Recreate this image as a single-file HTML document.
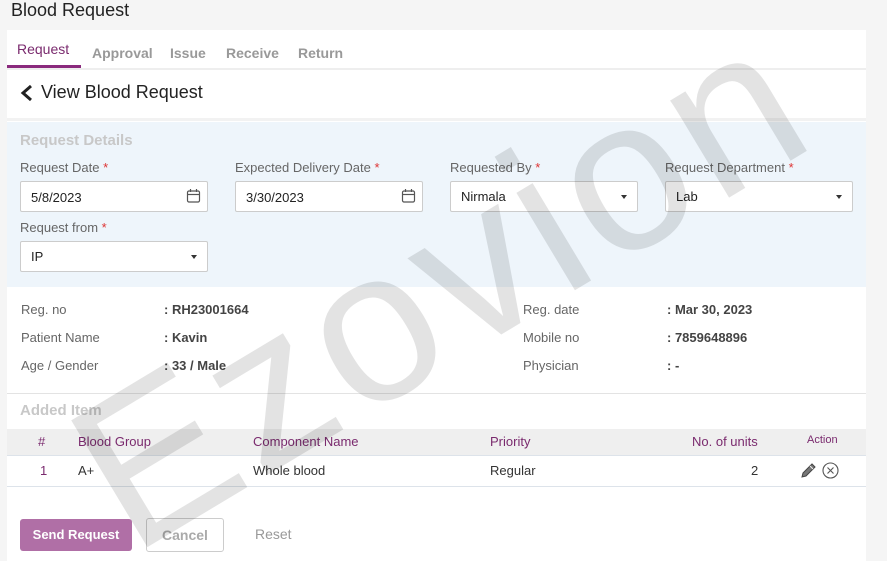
<!DOCTYPE html>
<html><head><style>
*{box-sizing:border-box;margin:0;padding:0}
html,body{width:887px;height:561px;overflow:hidden}
body{background:#f5f5f5;font-family:"Liberation Sans",sans-serif;font-size:13px;color:#333;position:relative}
.a{position:absolute;white-space:nowrap}
.card{position:absolute;left:7px;top:30px;width:859px;height:531px;background:#fff}
.lbl{color:#666;font-size:13px}
.req{color:#d33}
.inp{position:absolute;height:31px;border:1px solid #ccc;background:#fff;border-radius:2px;padding:8px 10px;font-size:13px;color:#222}
.car{position:absolute;right:10px;top:13px;border-left:3.5px solid transparent;border-right:3.5px solid transparent;border-top:4px solid #333}
.th{color:#7a2a6e;font-size:13px}
.wm{position:absolute;left:0;top:0;width:887px;height:561px;overflow:hidden;pointer-events:none}
</style></head><body>
<div class="a" style="left:11px;top:0px;font-size:18px;color:#222">Blood Request</div>
<div class="card"></div>
<div class="a" style="left:17px;top:41px;color:#7a2a6e;font-size:14px">Request</div>
<div class="a" style="left:7px;top:65px;width:74px;height:3px;background:#8a2a7d"></div>
<div class="a" style="left:92px;top:45px;color:#999;font-size:14px;font-weight:bold">Approval</div>
<div class="a" style="left:170px;top:45px;color:#999;font-size:14px;font-weight:bold">Issue</div>
<div class="a" style="left:226px;top:45px;color:#999;font-size:14px;font-weight:bold">Receive</div>
<div class="a" style="left:298px;top:45px;color:#999;font-size:14px;font-weight:bold">Return</div>
<div class="a" style="left:7px;top:68px;width:859px;height:2px;background:#eee"></div>
<svg class="a" style="left:20px;top:84px" width="14" height="18"><path d="M11 2 L3 9 L11 16" stroke="#222" stroke-width="3" fill="none"/></svg>
<div class="a" style="left:41px;top:82px;font-size:18px;color:#222">View Blood Request</div>
<div class="a" style="left:7px;top:118px;width:859px;height:3px;background:#f2f2f2"></div>
<div class="a" style="left:7px;top:122px;width:859px;height:165px;background:#eef5fb"></div>
<div class="a" style="left:20px;top:132px;font-size:15px;font-weight:bold;color:#c8c8c8">Request Details</div>
<div class="a lbl" style="left:20px;top:160px">Request Date <span class="req">*</span></div>
<div class="a lbl" style="left:235px;top:160px">Expected Delivery Date <span class="req">*</span></div>
<div class="a lbl" style="left:450px;top:160px">Requested By <span class="req">*</span></div>
<div class="a lbl" style="left:665px;top:160px">Request Department <span class="req">*</span></div>
<div class="inp" style="left:20px;top:181px;width:188px">5/8/2023<svg style="position:absolute;right:6px;top:6px" width="15" height="16"><rect x="1.5" y="3" width="12" height="11" rx="1.5" fill="none" stroke="#555" stroke-width="1.2"/><line x1="1.5" y1="6.5" x2="13.5" y2="6.5" stroke="#555" stroke-width="1.2"/><line x1="4.5" y1="1" x2="4.5" y2="4" stroke="#555" stroke-width="1.2"/><line x1="10.5" y1="1" x2="10.5" y2="4" stroke="#555" stroke-width="1.2"/></svg></div>
<div class="inp" style="left:235px;top:181px;width:188px">3/30/2023<svg style="position:absolute;right:6px;top:6px" width="15" height="16"><rect x="1.5" y="3" width="12" height="11" rx="1.5" fill="none" stroke="#555" stroke-width="1.2"/><line x1="1.5" y1="6.5" x2="13.5" y2="6.5" stroke="#555" stroke-width="1.2"/><line x1="4.5" y1="1" x2="4.5" y2="4" stroke="#555" stroke-width="1.2"/><line x1="10.5" y1="1" x2="10.5" y2="4" stroke="#555" stroke-width="1.2"/></svg></div>
<div class="inp" style="left:450px;top:181px;width:188px;padding-top:7px">Nirmala<span class="car"></span></div>
<div class="inp" style="left:665px;top:181px;width:188px;padding-top:7px">Lab<span class="car"></span></div>
<div class="a lbl" style="left:20px;top:220px">Request from <span class="req">*</span></div>
<div class="inp" style="left:20px;top:241px;width:188px;padding-top:7px">IP<span class="car"></span></div>
<div class="a lbl" style="left:21px;top:302px">Reg. no</div>
<div class="a lbl" style="left:21px;top:330px">Patient Name</div>
<div class="a lbl" style="left:21px;top:358px">Age / Gender</div>
<div class="a" style="left:164px;top:302px;font-weight:bold;color:#444">: RH23001664</div>
<div class="a" style="left:164px;top:330px;font-weight:bold;color:#444">: Kavin</div>
<div class="a" style="left:164px;top:358px;font-weight:bold;color:#444">: 33 / Male</div>
<div class="a lbl" style="left:523px;top:302px">Reg. date</div>
<div class="a lbl" style="left:523px;top:330px">Mobile no</div>
<div class="a lbl" style="left:523px;top:358px">Physician</div>
<div class="a" style="left:667px;top:302px;font-weight:bold;color:#444">: Mar 30, 2023</div>
<div class="a" style="left:667px;top:330px;font-weight:bold;color:#444">: 7859648896</div>
<div class="a" style="left:667px;top:358px;font-weight:bold;color:#444">: -</div>
<div class="a" style="left:7px;top:393px;width:859px;height:1px;background:#e3e3e3"></div>
<div class="a" style="left:20px;top:402px;font-size:15px;font-weight:bold;color:#c8c8c8">Added Item</div>
<div class="a" style="left:7px;top:429px;width:859px;height:27px;background:#efefef;border-bottom:1px solid #dde3ea"></div>
<div class="a th" style="left:38px;top:434px">#</div>
<div class="a th" style="left:78px;top:434px">Blood Group</div>
<div class="a th" style="left:253px;top:434px">Component Name</div>
<div class="a th" style="left:490px;top:434px">Priority</div>
<div class="a th" style="left:692px;top:434px">No. of units</div>
<div class="a th" style="left:807px;top:434px;font-size:11px">Action</div>
<div class="a" style="left:40px;top:463px;color:#7a2a6e">1</div>
<div class="a" style="left:78px;top:463px">A+</div>
<div class="a" style="left:253px;top:463px">Whole blood</div>
<div class="a" style="left:490px;top:463px">Regular</div>
<div class="a" style="left:751px;top:463px">2</div>
<svg class="a" style="left:799px;top:462px" width="18" height="18"><path d="M3 15 L4 11 L13 2 L16 5 L7 14 Z" fill="#777" stroke="#444" stroke-width="1"/><line x1="11" y1="4" x2="14" y2="7" stroke="#eee"/></svg>
<svg class="a" style="left:822px;top:462px" width="18" height="18"><circle cx="8.5" cy="8.5" r="7.5" fill="none" stroke="#555" stroke-width="1.1"/><path d="M5.5 5.5 L11.5 11.5 M11.5 5.5 L5.5 11.5" stroke="#555" stroke-width="1.1"/></svg>
<div class="a" style="left:7px;top:486px;width:859px;height:1px;background:#dde3ea"></div>
<div class="a" style="left:20px;top:519px;width:112px;height:32px;background:#b06fa6;border-radius:3px;color:#fff;font-weight:bold;text-align:center;line-height:32px">Send Request</div>
<div class="a" style="left:146px;top:518px;width:78px;height:34px;border:1px solid #ccc;border-radius:3px;color:#aaa;font-weight:bold;font-size:14px;text-align:center;line-height:32px">Cancel</div>
<div class="a" style="left:255px;top:526px;color:#999;font-size:14px">Reset</div>
<div class="wm"><div class="a" style="left:440px;top:285px;transform:translate(-50%,-50%) rotate(-31deg);font-size:215px;color:rgba(0,0,0,0.11);letter-spacing:6px">Ezovion</div></div>
</body></html>
